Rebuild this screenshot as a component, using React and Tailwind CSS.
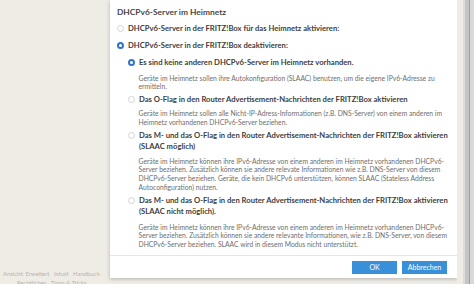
import React from "react";

function Radio({ checked }) {
  return checked ? (
    <span className="mt-[2px] box-border block h-[7px] w-[7px] shrink-0 rounded-full border-[2px] border-[#2f74c9] bg-white" />
  ) : (
    <span className="mt-[2px] box-border block h-[7px] w-[7px] shrink-0 rounded-full border border-[#d4d4d4] bg-white" />
  );
}

function Option({ checked, children, className = "" }) {
  return (
    <div className={"flex items-start gap-[4px] " + className}>
      <Radio checked={checked} />
      <div className="whitespace-nowrap text-[7.65px] font-bold leading-[11px] text-[#404040]">{children}</div>
    </div>
  );
}

function Desc({ children, className = "" }) {
  return (
    <div className={"ml-[10.5px] whitespace-nowrap text-[6.75px] leading-[8.6px] text-[#6e6e6e] " + className}>
      {children}
    </div>
  );
}

export default function App() {
  return (
    <div
      className="flex h-[284px] w-[474px] overflow-hidden bg-[#efece6]"
      style={{ fontFamily: "Lato, 'Noto Sans', sans-serif" }}
    >
      <div className="flex w-[110px] shrink-0 flex-col justify-end text-[5.9px] leading-[10px] text-[#b9b3aa]">
        <div className="whitespace-nowrap pl-[3px]">Ansicht: Erweitert&nbsp;&nbsp; Inhalt&nbsp;&nbsp; Handbuch</div>
        <div className="h-[5px] overflow-hidden whitespace-nowrap pl-[17px] leading-[8px]">Rechtliches&nbsp;&nbsp; Tipps &amp; Tricks</div>
      </div>
      <div className="flex h-[278px] w-[347px] shrink-0 flex-col bg-white shadow-[0_1px_4px_rgba(0,0,0,0.25)]">
        <div className="flex flex-1 flex-col pl-[7px] pt-[7px]">
          <div className="whitespace-nowrap text-[8.4px] font-bold leading-[11px] text-[#484848]">DHCPv6-Server im Heimnetz</div>
          <Option className="mt-[5px]">DHCPv6-Server in der FRITZ!Box für das Heimnetz aktivieren:</Option>
          <Option checked className="mt-[5.5px]">DHCPv6-Server in der FRITZ!Box deaktivieren:</Option>
          <div className="ml-[11px] flex flex-col">
            <Option checked className="mt-[6px]">Es sind keine anderen DHCPv6-Server im Heimnetz vorhanden.</Option>
            <Desc className="mt-[6px]">
              Geräte im Heimnetz sollen ihre Autokonfiguration (SLAAC) benutzen, um die eigene IPv6-Adresse zu
              <br />
              ermitteln.
            </Desc>
            <Option className="mt-[3px]">Das O-Flag in den Router Advertisement-Nachrichten der FRITZ!Box aktivieren</Option>
            <Desc className="mt-[4.5px]">
              Geräte im Heimnetz sollen alle Nicht-IP-Adress-Informationen (z.B. DNS-Server) von einem anderen im
              <br />
              Heimnetz vorhandenen DHCPv6-Server beziehen.
            </Desc>
            <Option className="mt-[3.5px]">
              Das M- und das O-Flag in den Router Advertisement-Nachrichten der FRITZ!Box aktivieren
              <br />
              (SLAAC möglich)
            </Option>
            <Desc className="mt-[5px]">
              Geräte im Heimnetz können ihre IPv6-Adresse von einem anderen im Heimnetz vorhandenen DHCPv6-
              <br />
              Server beziehen. Zusätzlich können sie andere relevate Informationen wie z.B. DNS-Server von diesem
              <br />
              DHCPv6-Server beziehen. Geräte, die kein DHCPv6 unterstützen, können SLAAC (Stateless Address
              <br />
              Autoconfiguration) nutzen.
            </Desc>
            <Option className="mt-[4px]">
              Das M- und das O-Flag in den Router Advertisement-Nachrichten der FRITZ!Box aktivieren
              <br />
              (SLAAC nicht möglich).
            </Option>
            <Desc className="mt-[5.5px]">
              Geräte im Heimnetz können ihre IPv6-Adresse von einem anderen im Heimnetz vorhandenen DHCPv6-
              <br />
              Server beziehen. Zusätzlich können sie andere relevante Informationen, wie z.B. DNS-Server, von diesem
              <br />
              DHCPv6-Server beziehen. SLAAC wird in diesem Modus nicht unterstützt.
            </Desc>
          </div>
        </div>
        <div className="flex h-[23px] items-center justify-end gap-[5px] border-t border-[#e6e6e6] pr-[10px]">
          <button className="flex h-[13px] w-[45px] items-center justify-center bg-[#3a8fd9] text-[7px] text-white">OK</button>
          <button className="flex h-[13px] w-[45px] items-center justify-center bg-[#3a8fd9] text-[7px] text-white">Abbrechen</button>
        </div>
      </div>
      <div className="w-[6px] shrink-0 bg-[#efece6]" />
      <div className="flex w-[11px] shrink-0">
        <div className="w-[2px] bg-[#dcdcdc]" />
        <div className="w-[4px] bg-[#c4c4c4]" />
        <div className="w-[1px] bg-[#9e9e9e]" />
        <div className="flex-1 bg-[#d9d9d9]" />
      </div>
    </div>
  );
}
